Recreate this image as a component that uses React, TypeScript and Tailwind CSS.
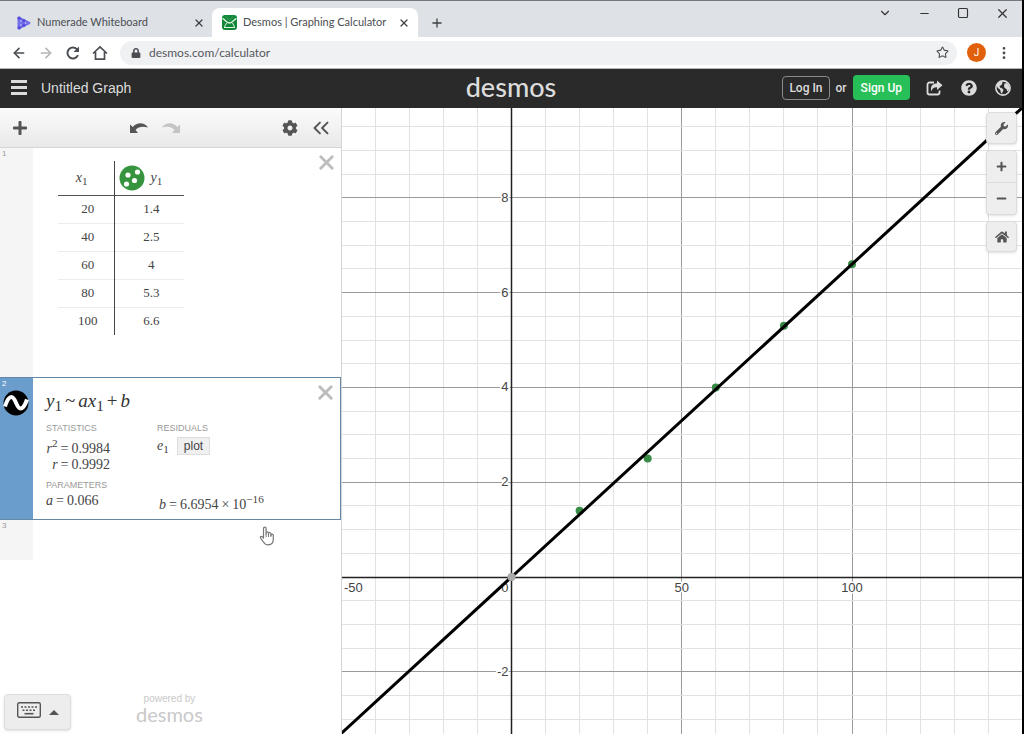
import { useState } from "react";
import type { ReactNode } from "react";
import {
  FaCog,
  FaHome,
  FaLock,
  FaMinus,
  FaPlus,
  FaQuestionCircle,
  FaWrench,
} from "react-icons/fa";
import {
  ArrowLeft,
  ArrowRight,
  ChevronDown,
  ChevronsLeft,
  EllipsisVertical,
  Minus,
  Plus,
  Square,
  Star,
  X,
} from "lucide-react";

const points = [
  { x: 20, y: 1.4 },
  { x: 40, y: 2.5 },
  { x: 60, y: 4 },
  { x: 80, y: 5.3 },
  { x: 100, y: 6.6 },
];

const fit = { a: 0.066, b: 0 };

// graph paper: pixel position of the origin and pixels per unit
const origin = { x: 169.5, y: 469 };
const scale = { x: 3.405, y: 47.4 };

const px = (x: number) => origin.x + x * scale.x;
const py = (y: number) => origin.y - y * scale.y;
const crisp = (v: number) => Math.floor(v) + 0.5;

function range(from: number, to: number, step: number) {
  const out: number[] = [];
  for (let v = from; v <= to; v += step) out.push(v);
  return out;
}

function NumeradeIcon() {
  return (
    <svg viewBox="0 0 14 14" className="h-3.5 w-3.5" aria-hidden="true">
      <path d="M1.500 1.500v11L12.500 7z" fill="#7670ea" stroke="#7670ea" strokeWidth="2" strokeLinejoin="round" />
      <g fill="#5a50e0">
        <circle cx="2.3" cy="2.3" r="1.8" />
        <circle cx="2.3" cy="11.7" r="1.8" />
        <circle cx="6.8" cy="4.7" r="1.8" />
        <circle cx="6.8" cy="9.3" r="1.8" />
      </g>
      <g fill="#dfe1f4">
        <circle cx="4" cy="5" r="0.7" />
        <circle cx="4" cy="9" r="0.7" />
        <circle cx="8.500" cy="7" r="0.7" />
      </g>
    </svg>
  );
}

function DesmosIcon() {
  return (
    <svg viewBox="0 0 15 15" className="h-[15px] w-[15px]" aria-hidden="true">
      <rect width="15" height="15" rx="3" fill="#12873a" />
      <path d="M0.500 3.500C3 4 4 8 7.500 8S12 4 14.500 3.500" fill="none" stroke="#d9f2de" strokeWidth="1.400" />
      <path d="M2 12.500h11M2.500 12 4.500 8M12.500 12l-2-4" fill="none" stroke="#d9f2de" strokeWidth="1" />
      <path d="M4 1.500 7.500 5.500 11 1.500" fill="none" stroke="#4fae6a" strokeWidth="0.800" />
    </svg>
  );
}

function ShareIcon() {
  return (
    <svg viewBox="0 0 17 16" className="h-4 w-[17px]" aria-hidden="true">
      <path
        d="M8 2.500H3.500A2 2 0 0 0 1.500 4.500v8a2 2 0 0 0 2 2h8a2 2 0 0 0 2-2V10.500"
        fill="none"
        stroke="currentColor"
        strokeWidth="1.800"
      />
      <path d="M11 0.500 16.500 5.200 11 10V7.300C7.800 7.200 6.300 8.200 5.300 11.500 4 6.500 6.300 3.400 11 3.200z" fill="currentColor" />
    </svg>
  );
}

function GlobeIcon() {
  return (
    <svg viewBox="0 0 16 16" className="h-4 w-4" aria-hidden="true">
      <circle cx="8" cy="8" r="7.100" fill="none" stroke="currentColor" strokeWidth="1.600" />
      <path d="M2 4.500C3.200 2.500 5 1.300 7 1.200L7.500 3 6.500 5 4.500 6 5 7.500l2.300 1 1.200 1.500-1 2-.5 2-1.300-1.800-.4-2.400L3.500 8.500 2 6.800z" fill="currentColor" />
      <path d="M9.500 3.500 12 3l2 2.500.8 2.500-1 2-1.500 1.500-.8-2.500-1.800-1-.7-2z" fill="currentColor" />
    </svg>
  );
}

function HandCursor() {
  return (
    <svg viewBox="0 0 16 20" className="absolute top-1.5 left-[259px] h-5 w-4" aria-hidden="true">
      <path
        d="M4.500 12V2.500a1.300 1.300 0 0 1 2.600 0V8v-1a1.200 1.200 0 0 1 2.400 0v1.500-.8a1.200 1.200 0 0 1 2.400 0V9.500a1.200 1.200 0 0 1 2.400-.3V13c0 3.500-1.800 5.800-5 5.800-3.500 0-4.300-1.600-5.500-3.600L1.500 12c-.7-1.300.8-2.200 1.700-1.200z"
        fill="#fff"
        stroke="#777"
        strokeWidth="1.200"
        strokeLinejoin="round"
      />
      <path d="M7.100 7.500V11M9.500 8v3M11.900 9v2" stroke="#777" strokeWidth="1" />
    </svg>
  );
}

function Tab({ icon, title, active }: { icon: ReactNode; title: string; active?: boolean }) {
  return (
    <div
      className={`flex h-full items-center ${
        active ? "w-[206px] rounded-t-lg bg-white pr-2 pl-2.5" : "w-[212px] pr-[7px] pl-[17px]"
      }`}
    >
      <button className="flex flex-1 items-center gap-1.5 text-left font-['Lato',sans-serif] text-[11px] whitespace-nowrap text-[#4b4e52]">
        {icon}
        <span>{title}</span>
      </button>
      <button aria-label={`Close ${title}`} className="text-[#3c4043]">
        <X size={12} strokeWidth={2.5} />
      </button>
    </div>
  );
}

function BrowserChrome() {
  return (
    <div className="bg-[#dee1e6] font-['Roboto',sans-serif]">
      <div className="flex h-[37px] border-t border-[#77777c]">
        <div className="flex pt-[7px]">
          <Tab icon={<NumeradeIcon />} title="Numerade Whiteboard" />
          <Tab icon={<DesmosIcon />} title="Desmos | Graphing Calculator" active />
          <button aria-label="New tab" className="ml-3 text-[#3c4043]">
            <Plus size={14} strokeWidth={2.2} />
          </button>
        </div>
        <div className="ml-auto flex h-6 items-center gap-[26px] pr-3 text-[#333]">
          <button aria-label="Search tabs"><ChevronDown size={14} strokeWidth={2} /></button>
          <button aria-label="Minimize"><Minus size={13} strokeWidth={2} /></button>
          <button aria-label="Maximize"><Square size={12} strokeWidth={2.3} /></button>
          <button aria-label="Close window"><X size={15} strokeWidth={2} /></button>
        </div>
      </div>
      <div className="flex h-8 items-center border-b border-[#b5b5b5] bg-white pr-2.5 pl-[11px] text-[#4a4d51]">
        <div className="flex items-center gap-[11px]">
          <button aria-label="Back"><ArrowLeft size={16} strokeWidth={2.4} /></button>
          <button aria-label="Forward" className="text-[#b3b5b8]"><ArrowRight size={16} strokeWidth={2.4} /></button>
          <button aria-label="Reload">
            <svg viewBox="0 0 16 16" className="h-4 w-4" aria-hidden="true">
              <path d="M13 10.200A5.500 5.500 0 1 1 12.300 4.600" fill="none" stroke="currentColor" strokeWidth="1.900" />
              <path d="M14 1.500v5.500H8.500z" fill="currentColor" />
            </svg>
          </button>
          <button aria-label="Home">
            <svg viewBox="0 0 16 16" className="h-4 w-4" aria-hidden="true">
              <path d="M1 8.500 8 2l7 6.500M3.500 7v7.200h9V7" fill="none" stroke="currentColor" strokeWidth="1.700" />
            </svg>
          </button>
        </div>
        <div className="ml-3 flex h-6 flex-1 items-center gap-2 rounded-full bg-[#f0f1f3] pr-2 pl-[11px]">
          <FaLock size={10} className="shrink-0" />
          <input
            aria-label="Address"
            defaultValue="desmos.com/calculator"
            className="min-w-0 flex-1 bg-transparent font-['Lato',sans-serif] text-xs text-[#55585c] outline-none"
          />
          <button aria-label="Bookmark this page"><Star size={13} strokeWidth={2} /></button>
        </div>
        <button
          aria-label="Profile"
          className="ml-2.5 h-[19px] w-[19px] rounded-full bg-[#e0600b] text-[10px] leading-none text-white"
        >
          J
        </button>
        <button aria-label="Browser menu" className="ml-2.5"><EllipsisVertical size={16} strokeWidth={2.2} /></button>
      </div>
    </div>
  );
}

function Header() {
  return (
    <header className="grid h-[39px] grid-cols-[1fr_auto_1fr] items-center bg-[#2a2a2a] text-[#dcdcdc]">
      <div className="flex items-center gap-3.5 pb-0.5 pl-[11px]">
        <button aria-label="Open menu" className="flex flex-col gap-[3px]">
          <span className="block h-[3px] w-4 bg-[#dcdcdc]" />
          <span className="block h-[3px] w-4 bg-[#dcdcdc]" />
          <span className="block h-[3px] w-4 bg-[#dcdcdc]" />
        </button>
        <span className="text-sm">Untitled Graph</span>
      </div>
      <a href="#home" className="pb-1 font-['Lato',sans-serif] text-[27px] leading-8 font-medium">desmos</a>
      <div className="flex items-center justify-end pr-[11px] pb-0.5 font-['Roboto',sans-serif] text-xs font-medium">
        <button className="h-6 rounded-sm border border-[#8a8a8a] px-1.5">Log In</button>
        <span className="mx-1.5">or</span>
        <button className="h-[25px] rounded-sm bg-[#27bf57] px-2 text-white">Sign Up</button>
        <button aria-label="Share graph" className="ml-4"><ShareIcon /></button>
        <button aria-label="Help" className="ml-[18px]"><FaQuestionCircle size={16} /></button>
        <button aria-label="Language" className="ml-[18px]"><GlobeIcon /></button>
      </div>
    </header>
  );
}

function CurvedArrow({ flip }: { flip?: boolean }) {
  return (
    <svg viewBox="0 0 18 12" className={`h-3 w-[18px] ${flip ? "-scale-x-100" : ""}`} aria-hidden="true">
      <path d="M0 2.500v8.500h8L5.500 8C8.500 4.500 13 4 18 5.500 14 0 7 0 2.800 5z" fill="currentColor" />
    </svg>
  );
}

function Gutter({ n, active, children }: { n: number; active?: boolean; children?: ReactNode }) {
  return (
    <div
      className={`flex w-[33px] shrink-0 flex-col text-[8px] leading-3 ${
        active ? "bg-[#6a9dcb] text-white" : "bg-[#f5f5f5] text-[#999]"
      }`}
    >
      <span className="pl-0.5">{n}</span>
      {children}
    </div>
  );
}

function DeleteButton({ label }: { label: string }) {
  return (
    <button aria-label={label} className="absolute top-[3px] right-[3px] text-[#bdbdbd]">
      <X size={23} strokeWidth={3} />
    </button>
  );
}

function Var({ name, sub }: { name: string; sub?: string }) {
  return (
    <>
      <i>{name}</i>
      {sub && <sub className="text-[80%]">{sub}</sub>}
    </>
  );
}

// math operator with a thin space on both sides
function Op({ children }: { children: string }) {
  return <span className="mx-[3px]">{children}</span>;
}

function DataTable() {
  return (
    <table className="mt-[13px] ml-[25px] w-[126px] table-fixed border-collapse self-start text-center font-['Liberation_Serif',serif] text-[13px] leading-5 text-[#444]">
      <thead>
        <tr className="h-[34px] border-b border-[#555]">
          <th className="w-[56px] border-r border-[#444] pr-2 text-sm font-normal">
            <Var name="x" sub="1" />
          </th>
          <th className="text-sm font-normal">
            <div className="flex items-center gap-1.5 pl-1">
              <button aria-label="Point style">
                <svg viewBox="0 0 26 26" className="h-[26px] w-[26px]" aria-hidden="true">
                  <circle cx="13" cy="13" r="12.500" fill="#36943f" />
                  <g fill="#fff">
                    <circle cx="9" cy="10" r="2.600" />
                    <circle cx="18.500" cy="7" r="2.600" />
                    <circle cx="15.500" cy="15.500" r="2.600" />
                    <circle cx="7.500" cy="19" r="2.600" />
                  </g>
                </svg>
              </button>
              <span><Var name="y" sub="1" /></span>
            </div>
          </th>
        </tr>
      </thead>
      <tbody>
        {points.map((p) => (
          <tr key={p.x} className="h-[28px] border-b border-[#ececec] last:border-b-0">
            <td className="border-r border-[#444] pl-1">{p.x}</td>
            <td className="pl-1">{p.y}</td>
          </tr>
        ))}
      </tbody>
    </table>
  );
}

function Label({ children }: { children: ReactNode }) {
  return <h3 className="text-[9px] leading-3 text-[#999] uppercase">{children}</h3>;
}

function Regression() {
  return (
    <div className="flex-1 pt-[11px] pl-[13px] font-['Liberation_Serif',serif] text-sm text-[#444]">
      <p className="text-[19px] leading-6 text-[#333]">
        <Var name="y" sub="1" />
        <Op>~</Op>
        <Var name="a" />
        <Var name="x" sub="1" />
        <Op>+</Op>
        <Var name="b" />
      </p>
      <div className="mt-[9px] grid grid-cols-[111px_1fr] font-['Liberation_Sans',sans-serif]">
        <Label>Statistics</Label>
        <Label>Residuals</Label>
      </div>
      <div className="grid grid-cols-[111px_1fr]">
        <div className="w-16 pt-[3px] text-right leading-4">
          <p className="pt-1">
            <i>r</i>
            <sup className="text-[80%]">2</sup>
            <Op>=</Op>0.9984
          </p>
          <p>
            <i>r</i>
            <Op>=</Op>0.9992
          </p>
        </div>
        <div className="flex h-6 items-center gap-2">
          <span><Var name="e" sub="1" /></span>
          <button className="h-[18px] border border-[#ddd] bg-[#f0f0f0] px-1.5 font-['Liberation_Sans',sans-serif] text-xs leading-none">
            plot
          </button>
        </div>
      </div>
      <div className="mt-1.5 font-['Liberation_Sans',sans-serif]">
        <Label>Parameters</Label>
      </div>
      <div className="grid grid-cols-[111px_1fr] leading-5">
        <p>
          <i>a</i>
          <Op>=</Op>
          {fit.a}
        </p>
        <p className="pt-1 pl-0.5">
          <i>b</i>
          <Op>=</Op>6.6954<Op>×</Op>10<sup className="text-[80%]">−16</sup>
        </p>
      </div>
    </div>
  );
}

function ExpressionPanel() {
  return (
    <aside className="relative flex w-[342px] shrink-0 flex-col border-r border-[#d5d5d5] bg-white">
      <div className="flex h-10 items-center border-b border-[#d5d5d5] bg-gradient-to-b from-[#fbfbfb] to-[#e9e9e9] pr-[7px] pl-3 text-[#555]">
        <button aria-label="Add item"><FaPlus size={16} /></button>
        <button aria-label="Undo" className="ml-auto"><CurvedArrow /></button>
        <button aria-label="Redo" className="ml-3.5 text-[#c4c4c4]"><CurvedArrow flip /></button>
        <button aria-label="Edit list" className="ml-[102px]"><FaCog size={16} /></button>
        <button aria-label="Hide list" className="ml-2.5"><ChevronsLeft size={26} strokeWidth={1.8} /></button>
      </div>

      <div className="relative flex h-[229px]">
        <Gutter n={1} />
        <DataTable />
        <DeleteButton label="Delete table" />
      </div>

      <div className="relative flex h-[143px] border border-l-0 border-[#6688a8]">
        <Gutter n={2} active>
          <button aria-label="Toggle curve" className="ml-[3px]">
            <svg viewBox="0 0 26 26" className="h-[26px] w-[26px]" aria-hidden="true">
              <circle cx="13" cy="13" r="12.500" fill="#000" />
              <path d="M2 16.500C4 10 6 7 8.500 7c4 0 5 11.500 9 11.500 2.500 0 4.500-3 6.500-9" fill="none" stroke="#fff" strokeWidth="4" />
            </svg>
          </button>
        </Gutter>
        <Regression />
        <DeleteButton label="Delete regression" />
      </div>

      <div className="relative flex h-10">
        <Gutter n={3} />
        <HandCursor />
      </div>

      <div className="mt-auto flex items-center pb-1 pl-1">
        <button
          aria-label="Open keypad"
          className="flex h-9 w-[67px] items-center justify-center gap-2 rounded-sm border border-[#ddd] bg-[#ededed] pb-1 text-[#555] shadow-sm"
        >
          <svg viewBox="0 0 24 16" className="h-4 w-6" aria-hidden="true">
            <rect x="0.700" y="0.700" width="22.600" height="14.600" rx="1.500" fill="none" stroke="currentColor" strokeWidth="1.400" />
            <path d="M4 5h16M5.500 8.300h14" stroke="currentColor" strokeWidth="1.600" strokeDasharray="2 1.500" />
            <path d="M7.500 11.700h9" stroke="currentColor" strokeWidth="1.600" />
          </svg>
          <svg viewBox="0 0 10 5" className="mt-1 h-[5px] w-2.5" aria-hidden="true">
            <path d="M0 5 5 0l5 5z" fill="currentColor" />
          </svg>
        </button>
        <div className="ml-[65px] pb-1.5 text-center text-[#c9c9c9]">
          <div className="text-[10px] leading-[10px]">powered by</div>
          <div className="font-['Lato',sans-serif] text-[20px] leading-5">desmos</div>
        </div>
      </div>
    </aside>
  );
}

function Graph() {
  const xs = range(-50, 300, 10);
  const ys = range(-14, 10, 0.5);
  const labelClass =
    "fill-[#444] stroke-white stroke-[3px] text-[13px] font-['Liberation_Sans',sans-serif] [paint-order:stroke]";

  return (
    <svg className="absolute inset-0 h-full w-full" role="img" aria-label="Scatter plot with fitted line">
      {xs.map((x) => (
        <line
          key={x}
          x1={crisp(px(x))}
          x2={crisp(px(x))}
          y1="0"
          y2="100%"
          stroke={x % 50 === 0 ? "#9a9a9a" : "#e2e2e2"}
        />
      ))}
      {ys.map((y) => (
        <line
          key={y}
          x1="0"
          x2="100%"
          y1={crisp(py(y))}
          y2={crisp(py(y))}
          stroke={y % 2 === 0 ? "#9a9a9a" : "#e2e2e2"}
        />
      ))}
      <line x1={crisp(px(0))} x2={crisp(px(0))} y1="0" y2="100%" stroke="#222" strokeWidth="1.500" />
      <line x1="0" x2="100%" y1={crisp(py(0))} y2={crisp(py(0))} stroke="#222" strokeWidth="1.500" />

      {[-2, 2, 4, 6, 8].map((y) => (
        <text key={y} x={px(0) - 3} y={py(y) + 4} textAnchor="end" className={labelClass}>
          {y}
        </text>
      ))}
      {[50, 100].map((x) => (
        <text key={x} x={px(x)} y={py(0) + 15} textAnchor="middle" className={labelClass}>
          {x}
        </text>
      ))}
      <text x="2" y={py(0) + 15} className={labelClass}>-50</text>
      <text x={px(0) - 3} y={py(0) + 15} textAnchor="end" className={labelClass}>0</text>

      {points.map((p) => (
        <circle key={p.x} cx={px(p.x)} cy={py(p.y)} r="4" fill="#388c46" />
      ))}
      <line
        x1={px(-60)}
        y1={py(fit.a * -60 + fit.b)}
        x2={px(300)}
        y2={py(fit.a * 300 + fit.b)}
        stroke="#000"
        strokeWidth="3"
      />
      <circle cx={px(0)} cy={py(0)} r="4" fill="#aaa" />
    </svg>
  );
}

function GraphControls() {
  const box = "w-[31px] rounded-sm border border-[#dcdcdc] bg-[#eeeeee] text-[#555] shadow-sm";

  return (
    <div className="absolute top-1 right-[5px] flex flex-col gap-1.5">
      <button aria-label="Graph settings" className={`${box} flex h-8 items-center justify-center`}>
        <FaWrench size={13} />
      </button>
      <div className={`${box} divide-y divide-[#dcdcdc]`}>
        <button aria-label="Zoom in" className="flex h-8 w-full items-center justify-center">
          <FaPlus size={11} />
        </button>
        <button aria-label="Zoom out" className="flex h-[31px] w-full items-center justify-center">
          <FaMinus size={11} />
        </button>
      </div>
      <button aria-label="Default viewport" className={`${box} flex h-[31px] items-center justify-center`}>
        <FaHome size={14} />
      </button>
    </div>
  );
}

export default function App() {
  const [panelOpen] = useState(true);

  return (
    <div className="flex min-h-screen flex-col border-r-2 border-black bg-white font-['Liberation_Sans',sans-serif]">
      <BrowserChrome />
      <Header />
      <main className="flex flex-1">
        {panelOpen && <ExpressionPanel />}
        <section className="relative flex-1 overflow-hidden bg-white">
          <Graph />
          <GraphControls />
        </section>
      </main>
    </div>
  );
}
